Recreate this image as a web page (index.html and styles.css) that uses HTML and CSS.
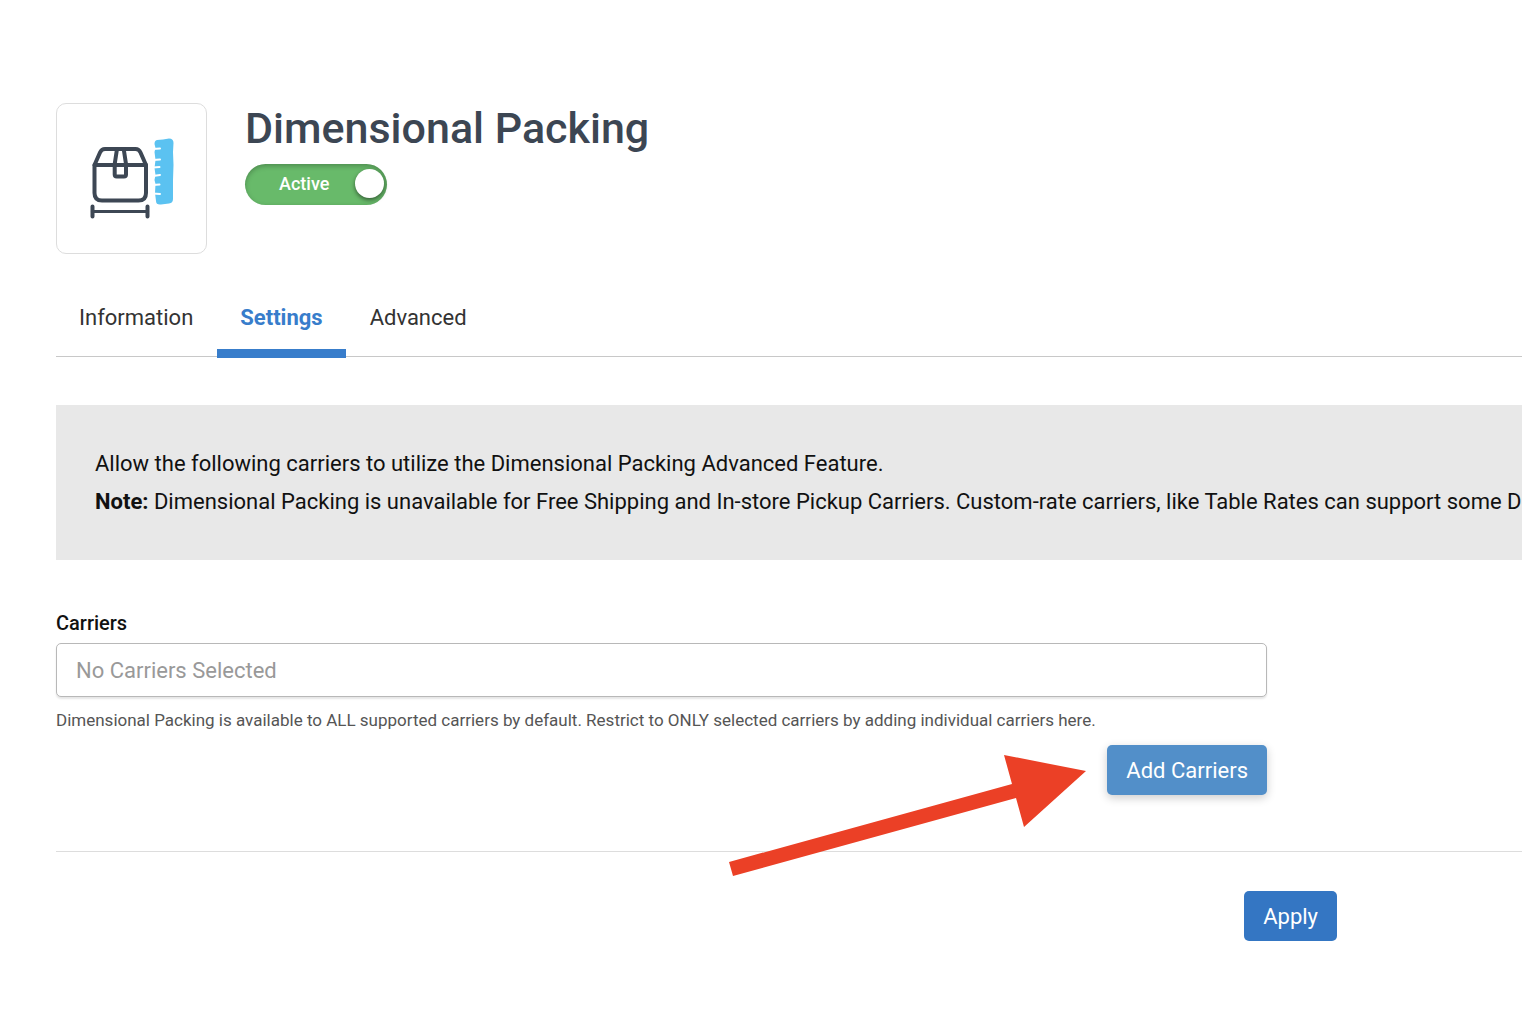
FILE: index.html
```html
<!DOCTYPE html>
<html lang="en">
<head>
    <meta charset="UTF-8">
    <meta name="viewport" content="width=device-width, initial-scale=1.0">
    <title>Dimensional Packing</title>
    <link rel="stylesheet" href="styles.css">
</head>
<body>
    <main class="page">
        <header class="feature-header">
            <div class="feature-icon">
                <svg width="90" height="90" viewBox="1 4 90 90" fill="none" aria-hidden="true">
                    <!-- Box -->
                    <g stroke="#3d4754" stroke-width="4" stroke-linecap="round" stroke-linejoin="round">
                        <path d="M8.500 35 L14 22.500 Q15.500 19 19 19 H49.500 Q53 19 54.500 22.500 L60 35"/>
                        <path d="M8.500 35 V63 Q8.500 70.500 16 70.500 H52.500 Q60 70.500 60 63 V35 Z"/>
                        <path d="M31 19 L28.700 34 V44.500 Q28.700 46.500 30.700 46.500 H38 Q40 46.500 40 44.500 V34 L37.700 19"/>
                        <path d="M6.500 76.500 V86.500 M61.500 76.500 V86.500"/>
                        <path d="M6.500 81.500 H61.500" stroke-width="3"/>
                    </g>
                    <!-- Ruler -->
                    <path fill="#5bc2f1" d="M71 10 Q77 9.500 83 8.500 Q87.500 8.500 87.500 13 L87 22 L87.500 35 L87 50 L87 69 Q87 73 83 73.500 L75 74.500 Q70 75 70 71 L69 63 L69.500 54 L68.500 50 L69.500 45 L68.500 38 L69.500 30 L68.500 22 L69.500 18 L68.500 14 Q68.500 10.500 71 10 Z"/>
                    <path stroke="#fff" stroke-width="2" stroke-linecap="round" d="M67 19 L74 18.500 M67 30 L74 29.500 M67 37.500 L73.500 37 M67 46 L74 45 M67 55 L73.500 54.500 M67 63.500 L74 64"/>
                </svg>
            </div>
            <div class="feature-info">
                <h1>Dimensional Packing</h1>
                <label class="toggle">
                    <span>Active</span>
                    <input type="checkbox" name="active" checked>
                </label>
            </div>
        </header>

        <nav class="tabs">
            <a href="#information">Information</a>
            <a href="#settings" class="active">Settings</a>
            <a href="#advanced">Advanced</a>
        </nav>

        <section class="notice">
            <p>Allow the following carriers to utilize the Dimensional Packing Advanced Feature.</p>
            <p><strong>Note:</strong> Dimensional Packing is unavailable for Free Shipping and In-store Pickup Carriers. Custom-rate carriers, like Table Rates can support some Dim</p>
        </section>

        <form id="settingsForm">
            <div class="form-group">
                <label for="carriers">Carriers</label>
                <input type="text" id="carriers" name="carriers" placeholder="No Carriers Selected" readonly>
                <p class="help">Dimensional Packing is available to ALL supported carriers by default. Restrict to ONLY selected carriers by adding individual carriers here.</p>
                <div class="add-row">
                    <button type="button" class="btn btn-add">Add Carriers</button>
                    <svg class="arrow" width="357" height="122" viewBox="0 0 357 122" aria-hidden="true">
                        <path fill="#eb4026" d="M0 107 L283 29 L275 0 L357 16 L295 72 L287 43 L4 121 Z"/>
                    </svg>
                </div>
            </div>

            <div class="form-actions">
                <button type="submit" class="btn btn-apply">Apply</button>
            </div>
        </form>
    </main>
</body>
</html>
```
FILE: styles.css
```css
* {
    box-sizing: border-box;
}
body {
    font-family: Roboto, 'Liberation Sans', sans-serif;
    font-size: 22px;
    color: #111;
    background-color: #fff;
    margin: 0;
}
h1, p {
    margin: 0;
}
.page {
    padding: 103px 0 76px 56px;
}
.feature-header {
    display: flex;
    gap: 38px;
}
.feature-icon {
    display: flex;
    justify-content: center;
    align-items: center;
    width: 151px;
    height: 151px;
    border: 1px solid #ddd;
    border-radius: 10px;
}
.feature-info h1 {
    margin-bottom: 11px;
    font-size: 43px;
    line-height: 50px;
    font-weight: 500;
    color: #3c4653;
}
.toggle {
    display: flex;
    justify-content: space-between;
    align-items: center;
    width: 142px;
    height: 41px;
    padding: 0 3px 2px 34px;
    border-radius: 21px;
    background-color: #68ba6a;
    box-shadow: inset 0 2px 5px rgba(0,0,0,0.25);
    color: white;
    font-size: 18px;
    font-weight: 500;
    cursor: pointer;
}
.toggle input {
    appearance: none;
    width: 29px;
    height: 29px;
    margin: 0;
    border-radius: 50%;
    background: white;
    box-shadow: 0 2px 4px rgba(0,0,0,0.5);
    cursor: pointer;
}
.tabs {
    display: flex;
    gap: 1px;
    margin-top: 36px;
    border-bottom: 1px solid #c8c8c8;
}
.tabs a {
    height: 68px;
    margin-bottom: -2px;
    padding: 0 23px;
    border-bottom: 9px solid transparent;
    line-height: 56px;
    color: #333;
    text-decoration: none;
}
.tabs a.active {
    border-bottom-color: #387dcb;
    color: #387dcb;
    font-weight: 700;
}
.notice {
    margin-top: 48px;
    padding: 40px 0 39px 39px;
    background-color: #e8e8e8;
    line-height: 38px;
    white-space: nowrap;
    overflow: hidden;
}
.form-group {
    margin: 50px 255px 56px 0;
}
.form-group label {
    display: block;
    margin-bottom: 6px;
    font-size: 20px;
    line-height: 27px;
    font-weight: 500;
}
.form-group input {
    display: block;
    width: 100%;
    height: 54px;
    padding: 0 19px;
    border: 1px solid #b8b8b8;
    border-radius: 5px;
    box-shadow: 0 2px 2px rgba(0,0,0,0.1);
    font-family: inherit;
    font-size: 22px;
}
.form-group input::placeholder {
    color: #999;
}
.help {
    margin: 11px 0 13px;
    font-size: 17px;
    line-height: 24px;
    color: #555;
}
.add-row {
    position: relative;
    display: flex;
    justify-content: flex-end;
}
/* Points at the Add Carriers button */
.arrow {
    position: absolute;
    top: 10px;
    right: 181px;
    pointer-events: none;
}
.btn {
    height: 50px;
    padding: 0 19px;
    border: none;
    border-radius: 5px;
    color: white;
    font-family: inherit;
    font-size: 22px;
    cursor: pointer;
}
.btn-add {
    background-color: #528fc9;
    box-shadow: 0 3px 10px rgba(0,0,0,0.2);
}
.btn-apply {
    background-color: #3476c3;
}
.form-actions {
    display: flex;
    justify-content: flex-end;
    padding: 39px 185px 0 0;
    border-top: 1px solid #ddd;
}
```
